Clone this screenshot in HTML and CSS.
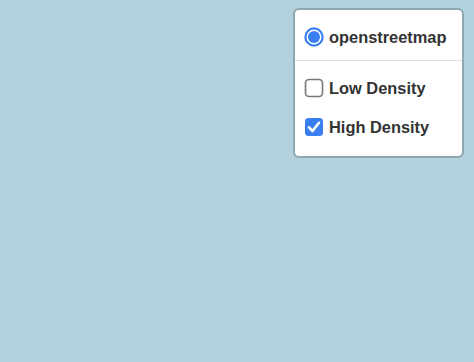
FILE: index.html
```html
<!DOCTYPE html>
<html>
<head>
<meta charset="utf-8">
<link rel="stylesheet" href="styles.css">
</head>
<body>
<div class="map">
  <div class="layers">
    <label class="row row-base">
      <svg class="ctl" width="20" height="20" viewBox="0 0 20 20"><circle cx="10" cy="10" r="8.6" fill="#fff" stroke="#3a7ff1" stroke-width="2.2"/><circle cx="10" cy="10" r="6" fill="#3a7ff1"/></svg>
      <span class="name">openstreetmap</span>
    </label>
    <div class="sep"></div>
    <label class="row row-first">
      <svg class="ctl" width="20" height="20" viewBox="0 0 20 20"><rect x="1.5" y="1.5" width="17" height="17" rx="3.5" fill="#fff" stroke="#767676" stroke-width="1.6"/></svg>
      <span class="name">Low Density</span>
    </label>
    <label class="row row-next">
      <svg class="ctl" width="20" height="20" viewBox="0 0 20 20"><rect x="1" y="1" width="18" height="18" rx="3.5" fill="#3a7ff1"/><path d="M5 10.3 L8.5 14 L15 5.8" fill="none" stroke="#fff" stroke-width="2.6" stroke-linecap="round" stroke-linejoin="round"/></svg>
      <span class="name">High Density</span>
    </label>
  </div>
</div>
</body>
</html>
```
FILE: styles.css
```css
html, body {
  margin: 0;
  padding: 0;
  height: 100%;
}
body {
  background: #b2d1dc;
  font-family: "Liberation Sans", Arial, sans-serif;
}
.map {
  display: flex;
  justify-content: flex-end;
  align-items: flex-start;
  padding: 8px 10px 0 0;
  height: 100%;
  box-sizing: border-box;
}
.layers {
  width: 171px;
  height: 150px;
  box-sizing: border-box;
  background: #fff;
  border: 2px solid rgba(0, 0, 0, 0.2);
  background-clip: padding-box;
  border-radius: 6px;
  display: flex;
  flex-direction: column;
  padding: 17px 0 0 0;
}
.row {
  display: flex;
  align-items: center;
  height: 20px;
  padding-left: 9px;
  gap: 5px;
}
.ctl {
  flex: none;
  display: block;
}
.name {
  font-weight: bold;
  font-size: 16.4px;
  color: #333;
}
.sep {
  height: 1px;
  background: #ddd;
  margin: 13px 0 0 0;
}
.row-first {
  margin-top: 17px;
}
.row-next {
  margin-top: 19px;
}
```
